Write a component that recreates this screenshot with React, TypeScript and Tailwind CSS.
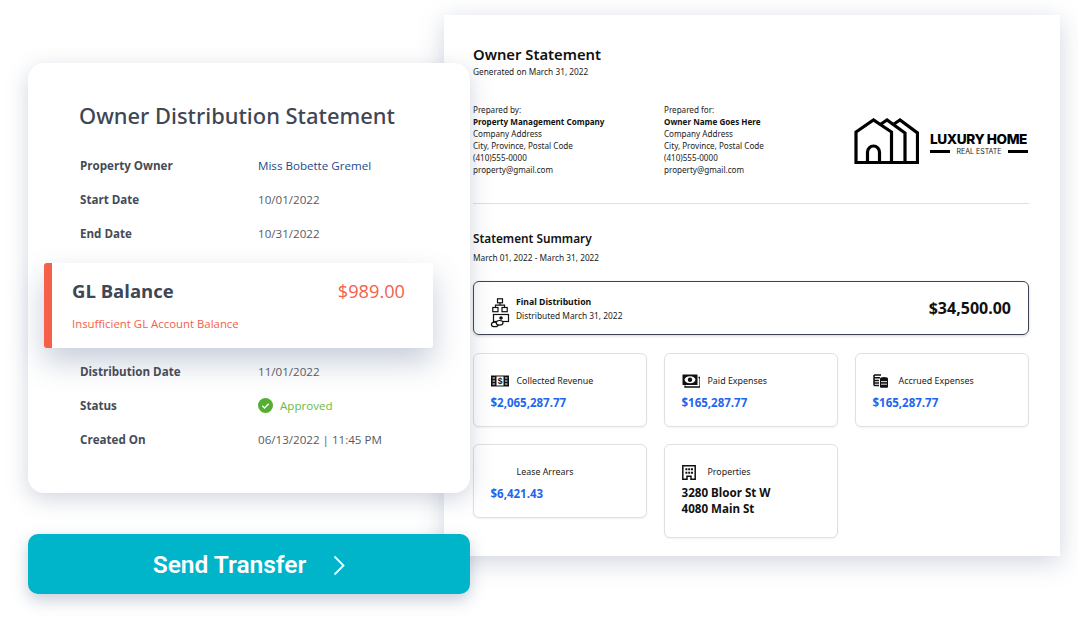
import { FC, ReactNode } from 'react';

const summaryFont = "font-['Noto_Sans',sans-serif]";

const CashIcon: FC = () => (
  <svg width="18" height="12" viewBox="0 0 18 12" className="block">
    <rect x="0" y="0.5" width="18" height="11" fill="#111" />
    <rect x="5.5" y="1.5" width="7" height="9" fill="#fff" />
    <path d="M1.5 3h2.5M1.5 6h2.5M1.5 9h2.5M14 3h2.5M14 6h2.5M14 9h2.5" stroke="#fff" strokeWidth="1" />
    <text x="9" y="9.3" textAnchor="middle" fontSize="8.5" fontWeight="700" fill="#111" fontFamily="'Liberation Sans', sans-serif">$</text>
  </svg>
);

const BillsIcon: FC = () => (
  <svg width="18" height="14" viewBox="0 0 18 14" className="block">
    <path d="M3 11.5V13h15V3.5h-1.5" fill="none" stroke="#111" strokeWidth="1.3" />
    <rect x="0.5" y="0.5" width="15" height="10.5" rx="0.5" fill="#111" />
    <ellipse cx="8" cy="5.8" rx="5.4" ry="3.5" fill="#fff" />
    <circle cx="8" cy="5.8" r="2.2" fill="#111" />
  </svg>
);

const CoinsIcon: FC = () => (
  <svg width="16" height="16" viewBox="0 0 16 16" className="block">
    <path d="M1 2h7M1 4.7h6M1 7.4h5M1 10h5M1 12.6h5M1 2v10.6" fill="none" stroke="#111" strokeWidth="1.5" />
    <ellipse cx="11" cy="5.7" rx="4" ry="1.6" fill="#111" />
    <rect x="7" y="5.7" width="8" height="9" rx="1" fill="#111" />
    <path d="M8 8.6h6M8 11.2h6" stroke="#fff" strokeWidth="0.9" />
  </svg>
);

const BuildingIcon: FC = () => (
  <svg width="14" height="15" viewBox="0 0 14 15" className="block">
    <path d="M.8.8h12.4v13.4H9v-3H5v3H.8z" fill="none" stroke="#111" strokeWidth="1.5" />
    <path d="M3.4 3.2h2v2h-2zM6.2 3.2h2v2h-2zM9 3.2h2v2H9zM3.4 6.8h2v2h-2zM6.2 6.8h2v2h-2zM9 6.8h2v2H9z" fill="#111" />
  </svg>
);

const DistributionIcon: FC = () => (
  <svg width="20" height="30" viewBox="0 0 20 30" className="block">
    <g fill="none" stroke="#111" strokeWidth="1.2">
      <rect x="7.5" y="0.8" width="5" height="4" />
      <path d="M10 4.8v2.4M5.5 9.5V7.2h9v2.3" />
      <rect x="2.8" y="9.5" width="5.2" height="4.2" />
      <rect x="12" y="9.5" width="5.2" height="4.2" />
      <rect x="3.5" y="16.5" width="15" height="7" />
      <ellipse cx="4.8" cy="26.4" rx="3.4" ry="2.3" fill="#fff" />
      <ellipse cx="9.6" cy="24.8" rx="3.4" ry="2.3" fill="#fff" />
    </g>
    <circle cx="11" cy="20" r="1.8" fill="#111" />
  </svg>
);

const HouseLogo: FC = () => (
  <svg width="65" height="47" viewBox="0 0 65 47" className="block">
    <g fill="none" stroke="#000" strokeWidth="3.2" strokeLinejoin="miter">
      <path d="M2 44.5V14L19.5 2 37.5 14v30.5H2z" />
      <path d="M13.5 44.5V34a6 6 0 0 1 12 0v10.5" />
      <path d="M27 6l6-4 18 13v29.5" />
      <path d="M40 6l6-4 17.5 13v29.5H37.5" />
    </g>
  </svg>
);

const InfoRow: FC<{ label: string; children: ReactNode }> = ({ label, children }) => (
  <div className="flex h-[34px] items-center text-[11.6px]">
    <span className="w-[178px] font-bold text-[#454b57]">{label}</span>
    <span className="text-[#555b66]">{children}</span>
  </div>
);

const StatCard: FC<{ icon?: ReactNode; label: string; className?: string; children: ReactNode }> = ({ icon, label, className, children }) => (
  <div className={`rounded-md border border-[#e0e0e0] bg-white pt-[19px] pr-2 pl-[16.5px] shadow-[0_1px_2px_rgba(0,0,0,0.05)] ${className ?? 'h-[74px]'}`}>
    <div className="flex h-4 items-center">
      <span className="w-[26px]">{icon}</span>
      <span className="text-[8.9px] text-[#222]">{label}</span>
    </div>
    {children}
  </div>
);

const Amount: FC<{ value: string }> = ({ value }) => (
  <p className="mt-[4px] text-[11.5px] leading-[20px] font-bold text-[#1f66ee]">{value}</p>
);

const ContactBlock: FC<{ heading: string; name: string; className?: string }> = ({ heading, name, className }) => (
  <div className={`text-[8.1px] leading-[12px] text-[#222] ${className ?? ''}`}>
    <p>{heading}</p>
    <p className="font-bold text-[#111]">{name}</p>
    <p>Company Address</p>
    <p>City, Province, Postal Code</p>
    <p>(410)555-0000</p>
    <p>property@gmail.com</p>
  </div>
);

const App: FC = () => {
  return (
    <div className="relative h-[617px] w-[1078px] overflow-hidden bg-white font-['Open_Sans',sans-serif]">
      {/* Statement sheet behind the cards */}
      <div className={`absolute top-[15px] left-[444px] h-[541px] w-[616px] bg-white pt-[30px] pr-[31px] pl-[29px] shadow-[0_6px_24px_rgba(90,105,140,0.28)] ${summaryFont}`}>
        <h2 className="text-[14.8px] leading-[18px] font-semibold text-[#111]">Owner Statement</h2>
        <p className="mt-[2px] text-[8.3px] leading-[14px] text-[#222]">Generated on March 31, 2022</p>

        <div className="mt-[25px] flex items-start border-b border-[#dcdfe3] pb-[27px]">
          <ContactBlock heading="Prepared by:" name="Property Management Company" className="w-[191px]" />
          <ContactBlock heading="Prepared for:" name="Owner Name Goes Here" className="w-[190px]" />
          <div className="mt-[14px] flex items-center gap-[11px]">
            <HouseLogo />
            <div className="mt-[5px] w-[98px] font-['Inter',sans-serif]">
              <p className="text-[13.6px] leading-[14px] font-extrabold tracking-[-0.4px] whitespace-nowrap text-black">LUXURY HOME</p>
              <div className="mt-[1px] flex items-center justify-between">
                <span className="h-[3px] w-[20px] bg-black" />
                <span className="text-[7px] leading-[9px] text-[#222]">REAL ESTATE</span>
                <span className="h-[3px] w-[20px] bg-black" />
              </div>
            </div>
          </div>
        </div>

        <h3 className="mt-[26px] text-[11.8px] leading-[16px] font-semibold text-[#111]">Statement Summary</h3>
        <p className="mt-[5px] text-[8.3px] leading-[14px] text-[#222]">March 01, 2022 - March 31, 2022</p>

        <div className="mt-[16px] flex h-[54px] items-center justify-between rounded-md border border-[#3d4352] pr-[17px] pl-[16px] shadow-[0_1px_3px_rgba(60,70,100,0.25)]">
          <div className="flex items-center gap-[6px]">
            <div className="mt-[10px]"><DistributionIcon /></div>
            <div className="pt-[2px] text-[8.4px] leading-[14px] text-[#222]">
              <p className="text-[8.7px] font-bold text-[#111]">Final Distribution</p>
              <p>Distributed March 31, 2022</p>
            </div>
          </div>
          <span className="text-base font-bold text-[#111]">$34,500.00</span>
        </div>

        <div className="mt-[18px] grid grid-cols-[174px_174px_174px] items-start gap-[17px]">
          <StatCard icon={<CashIcon />} label="Collected Revenue"><Amount value="$2,065,287.77" /></StatCard>
          <StatCard icon={<BillsIcon />} label="Paid Expenses"><Amount value="$165,287.77" /></StatCard>
          <StatCard icon={<CoinsIcon />} label="Accrued Expenses"><Amount value="$165,287.77" /></StatCard>
          <StatCard label="Lease Arrears"><Amount value="$6,421.43" /></StatCard>
          <StatCard icon={<BuildingIcon />} label="Properties" className="h-[94px]">
            <p className="mt-[5px] text-[11.6px] leading-[16px] font-bold text-[#111]">
              3280 Bloor St W
              <br />
              4080 Main St
            </p>
          </StatCard>
        </div>
      </div>

      {/* Left column */}
      <div className="relative ml-[28px] w-[442px] pt-[63px]">
        <div className="h-[430px] rounded-2xl bg-white pt-[38px] shadow-[0_6px_22px_rgba(90,105,140,0.28)]">
          <h1 className="ml-[51px] font-['Noto_Sans',sans-serif] text-[21.9px] leading-[30px] font-medium text-[#3f4654]">Owner Distribution Statement</h1>
          <div className="mt-[18px] ml-[52px]">
            <InfoRow label="Property Owner"><span className="text-[#1c4a8c]">Miss Bobette Gremel</span></InfoRow>
            <InfoRow label="Start Date">10/01/2022</InfoRow>
            <InfoRow label="End Date">10/31/2022</InfoRow>
          </div>

          <div className="mt-[12px] ml-[16px] h-[85px] w-[389px] rounded-[3px] border-l-[8px] border-[#f4604a] bg-white pt-[14px] pr-[28px] pl-[20px] shadow-[0_14px_30px_rgba(80,100,140,0.32)]">
            <div className="flex items-center justify-between">
              <span className="text-[18.5px] leading-[28px] font-bold text-[#3f4654]">GL Balance</span>
              <span className="text-[18.2px] leading-[28px] text-[#f4604a]">$989.00</span>
            </div>
            <p className="mt-[11px] text-[11.4px] leading-[16px] text-[#f4604a]">Insufficient GL Account Balance</p>
          </div>

          <div className="mt-[6.5px] ml-[52px]">
            <InfoRow label="Distribution Date">11/01/2022</InfoRow>
            <InfoRow label="Status">
              <span className="flex items-center gap-[7px] text-[#67bb46]">
                <svg width="15" height="15" viewBox="0 0 15 15">
                  <circle cx="7.5" cy="7.5" r="7.5" fill="#55ae32" />
                  <path d="M4.3 7.7l2.2 2.2 4.2-4.2" fill="none" stroke="#fff" strokeWidth="1.4" />
                </svg>
                Approved
              </span>
            </InfoRow>
            <InfoRow label="Created On">06/13/2022 | 11:45 PM</InfoRow>
          </div>
        </div>

        <button className="mt-[41px] flex h-[60px] w-full items-center justify-center gap-[27px] rounded-[10px] bg-[#00b4c9] pt-[3px] font-['Roboto',sans-serif] text-[24.5px] font-semibold text-white shadow-[0_6px_16px_rgba(70,90,130,0.3)]">
          <span>Send Transfer</span>
          <svg width="12" height="21" viewBox="0 0 12 21">
            <path d="M1.5 1.5l9 9-9 9" fill="none" stroke="#fff" strokeWidth="1.8" />
          </svg>
        </button>
      </div>
    </div>
  );
};

export default App;
